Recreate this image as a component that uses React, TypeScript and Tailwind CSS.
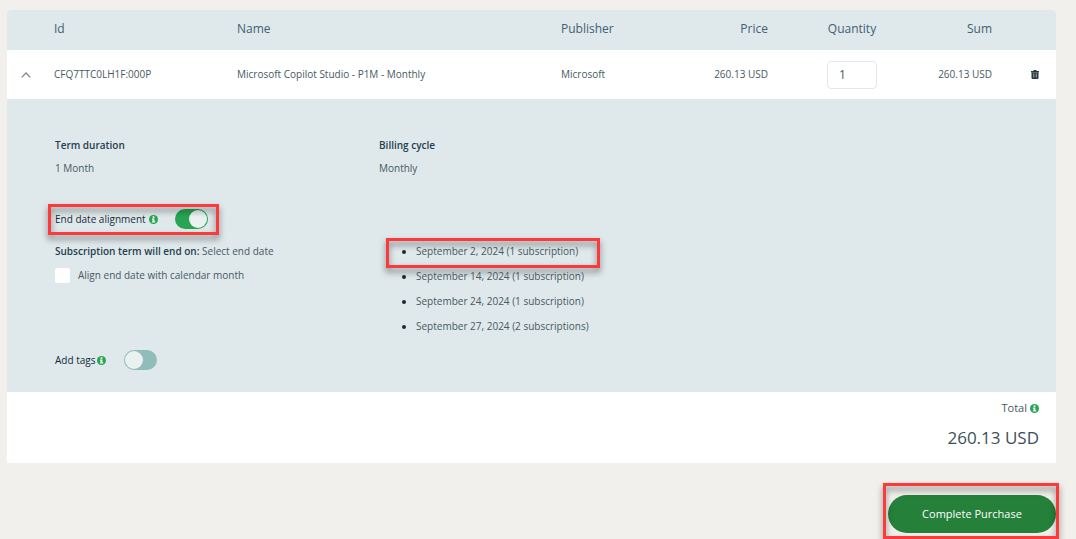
import { useState, type ReactNode } from "react";

const endDates = [
  { label: "September 2, 2024 (1 subscription)", highlighted: true },
  { label: "September 14, 2024 (1 subscription)", highlighted: false },
  { label: "September 24, 2024 (1 subscription)", highlighted: false },
  { label: "September 27, 2024 (2 subscriptions)", highlighted: false },
];

function InfoIcon() {
  return (
    <svg viewBox="0 0 16 16" className="size-[9px] shrink-0" aria-hidden="true">
      <circle cx="8" cy="8" r="8" fill="#27a552" />
      <path d="M6.4 2.2h3.2v3H6.4zM5.2 6.4h4.4v4.8h1.4v2.2H5.2v-2.2h1.2V8.6H5.2z" fill="#eef6f2" />
    </svg>
  );
}

function TrashIcon() {
  return (
    <svg viewBox="0 0 16 18" className="h-[9px] w-2" aria-hidden="true">
      <path d="M5 0h6v2h5v3H0V2h5z" fill="#27383f" />
      <path d="M1 5h14v11a2 2 0 0 1-2 2H3a2 2 0 0 1-2-2z" fill="#27383f" />
      <path d="M5.5 7v8M10.5 7v8" stroke="#a9b8b8" strokeWidth="1.8" />
    </svg>
  );
}

function Highlight({ className }: { className: string }) {
  return (
    <span
      aria-hidden="true"
      className={`pointer-events-none absolute border-3 border-[#fb3b3b] drop-shadow-[0_4px_3px_rgba(0,0,0,0.5)] ${className}`}
    />
  );
}

function Toggle({ id, defaultChecked = false }: { id: string; defaultChecked?: boolean }) {
  return (
    <span className="relative inline-flex h-5 w-[33px] shrink-0">
      <input
        id={id}
        type="checkbox"
        role="switch"
        defaultChecked={defaultChecked}
        className="peer h-5 w-full cursor-pointer appearance-none rounded-full bg-[#90bdb9] checked:bg-[#27a552]"
      />
      <span className="pointer-events-none absolute top-px left-px size-[18px] rounded-full bg-[#e9f1f1] peer-checked:left-[14px]" />
    </span>
  );
}

function Field({ label, children }: { label: string; children: ReactNode }) {
  return (
    <div className="leading-[23px]">
      <dt className="font-semibold text-[#24404c]">{label}</dt>
      <dd>{children}</dd>
    </div>
  );
}

export default function App() {
  const [open, setOpen] = useState(true);

  return (
    <main className="min-h-screen bg-[#f1f0ec] pt-[10px] pr-5 pl-[7px] font-['Open_Sans',sans-serif] text-[10px] text-[#475962]">
      <div className="overflow-hidden rounded-t-sm bg-white">
        <table className="w-full table-fixed border-collapse text-left">
          <colgroup>
            <col className="w-[47px]" />
            <col className="w-[183px]" />
            <col />
            <col className="w-[124px]" />
            <col className="w-[83px]" />
            <col className="w-[168px]" />
            <col className="w-14" />
            <col className="w-16" />
          </colgroup>
          <thead>
            <tr className="h-10 bg-[#dfe8eb] text-xs text-[#3f6173] [&>th]:pb-[2px] [&>th]:font-normal">
              <td />
              <th scope="col">Id</th>
              <th scope="col">Name</th>
              <th scope="col">Publisher</th>
              <th scope="col" className="text-right">Price</th>
              <th scope="col" className="text-center">Quantity</th>
              <th scope="col" className="text-right">Sum</th>
              <td />
            </tr>
          </thead>
          <tbody>
            <tr className="h-[49px]">
              <td>
                <button
                  type="button"
                  aria-label="Toggle details"
                  aria-expanded={open}
                  onClick={() => setOpen(!open)}
                  className="ml-[14px] block cursor-pointer pt-px"
                >
                  <svg viewBox="0 0 10 6" className="h-[6px] w-[10px]" fill="none" aria-hidden="true">
                    <path d="M.7 5.4 5 1l4.3 4.4" stroke="#7d898d" strokeWidth="1.3" />
                  </svg>
                </button>
              </td>
              <td>CFQ7TTC0LH1F:000P</td>
              <td>Microsoft Copilot Studio - P1M - Monthly</td>
              <td>Microsoft</td>
              <td className="text-right whitespace-nowrap">260.13 USD</td>
              <td className="text-center">
                <input
                  aria-label="Quantity"
                  inputMode="numeric"
                  defaultValue="1"
                  className="inline-block h-7 w-[50px] rounded-sm border border-[#dfe8eb] bg-white px-[11px] text-xs"
                />
              </td>
              <td className="text-right whitespace-nowrap">260.13 USD</td>
              <td>
                <button type="button" aria-label="Remove item" className="ml-[39px] block cursor-pointer">
                  <TrashIcon />
                </button>
              </td>
            </tr>
            {open && (
              <tr className="bg-[#dfe8eb] align-top">
                <td colSpan={8} className="px-12 pt-[35px] pb-[22px]">
                  <dl className="grid grid-cols-[324px_1fr]">
                    <Field label="Term duration">1 Month</Field>
                    <Field label="Billing cycle">Monthly</Field>
                  </dl>

                  <div className="relative mt-[27px] flex h-6 w-fit items-center gap-[17px]">
                    <label htmlFor="end-date-alignment" className="flex items-center gap-[3px] font-medium text-[#142c38]">
                      End date alignment <InfoIcon />
                    </label>
                    <Toggle id="end-date-alignment" defaultChecked />
                    <Highlight className="-top-[3px] -right-[11px] -bottom-1 -left-[7px]" />
                  </div>

                  <div className="mt-2 grid grid-cols-[324px_1fr]">
                    <div className="leading-6">
                      <p>
                        <span className="font-semibold text-[#24404c]">Subscription term will end on:</span> Select end date
                      </p>
                      <label className="flex items-center gap-2">
                        <input type="checkbox" className="size-[15px] appearance-none rounded-xs bg-white checked:bg-[#27a552]" />
                        Align end date with calendar month
                      </label>
                    </div>
                    <ul className="list-disc pl-[37px] leading-[25px] marker:text-[#1d2b31]">
                      {endDates.map((date) => (
                        <li key={date.label}>
                          <span className="relative">
                            {date.label}
                            {date.highlighted && <Highlight className="-top-[6px] -right-[22px] -bottom-[10px] -left-[30px]" />}
                          </span>
                        </li>
                      ))}
                    </ul>
                  </div>

                  <div className="mt-[11px] flex items-center gap-[18px]">
                    <label htmlFor="add-tags" className="flex items-center gap-[2px] font-medium text-[#142c38]">
                      Add tags <InfoIcon />
                    </label>
                    <Toggle id="add-tags" />
                  </div>
                </td>
              </tr>
            )}
          </tbody>
        </table>

        <div className="flex flex-col items-end px-[17px] pt-[6px] pb-[11px]">
          <p className="flex items-center gap-[3px] text-[11px] leading-5">
            Total <InfoIcon />
          </p>
          <p className="mt-[6px] text-[17px] leading-7 text-[#3d4f58]">260.13 USD</p>
        </div>
      </div>

      <div className="flex justify-end pt-8">
        <div className="relative">
          <button
            type="button"
            className="h-[38px] w-[168px] cursor-pointer rounded-full bg-[#258039] text-[11px] font-medium text-white"
          >
            Complete Purchase
          </button>
          <Highlight className="-top-3 -right-[3px] -bottom-[6px] -left-[5px]" />
        </div>
      </div>
    </main>
  );
}
